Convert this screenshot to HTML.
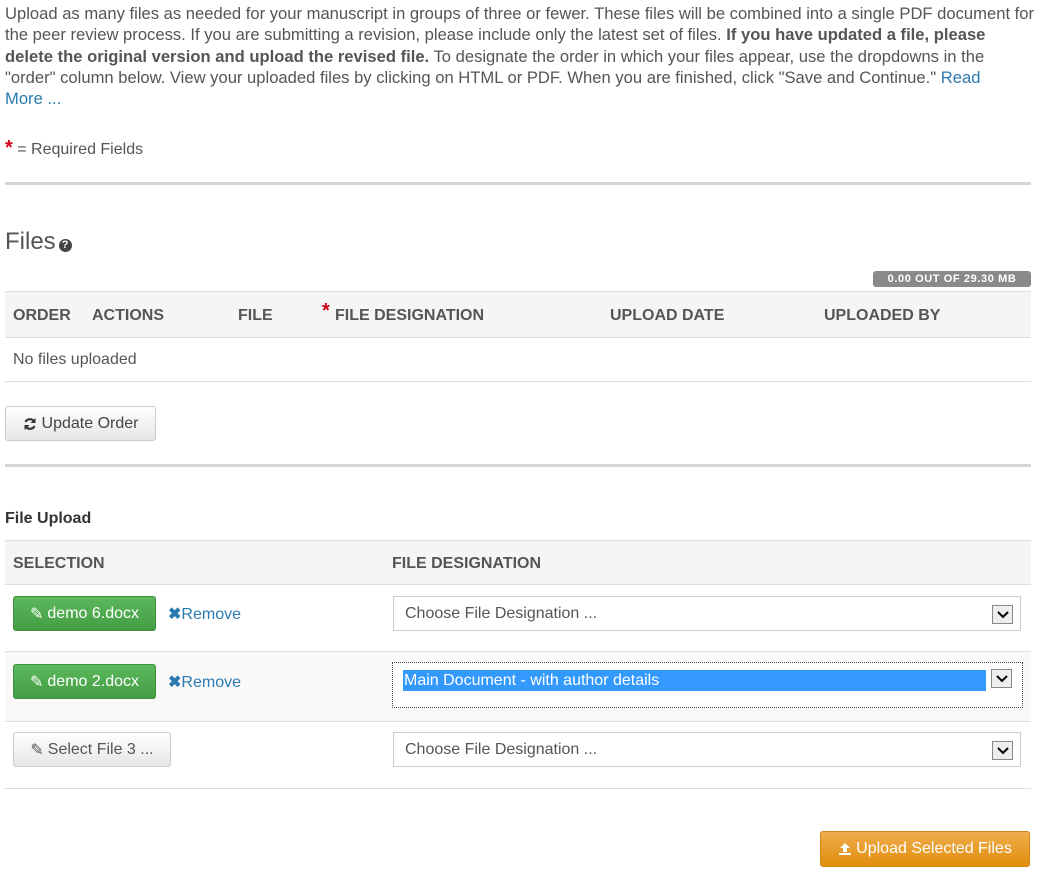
<!DOCTYPE html>
<html><head><meta charset="utf-8"><style>
*{box-sizing:border-box;margin:0;padding:0}
body{width:1052px;height:879px;background:#fff;font-family:"Liberation Sans",Arial,sans-serif;font-size:16px;color:#555;position:relative;overflow:hidden}
.a{position:absolute}
p.intro{position:absolute;left:5px;top:3px;width:1047px;line-height:21.3px;font-size:16.6px;white-space:nowrap}
a{color:#2a7ab0;text-decoration:none}
.req{color:#d0021b;font-weight:bold}
.hr{position:absolute;left:5px;width:1026px;height:3px;background:#d5d5d5}
.th{position:absolute;left:5px;width:1026px;background:#f5f5f5;border-top:1px solid #ddd;border-bottom:1px solid #ddd}
.th span{position:absolute;font-weight:bold;font-size:16px;color:#555;white-space:nowrap}
.line{position:absolute;left:5px;width:1026px;height:1px;background:#ddd}
.btn{position:absolute;border-radius:3px;font-size:16px;display:flex;align-items:center;justify-content:center;white-space:nowrap}
.gray{background:linear-gradient(#fff,#e6e6e6);border:1px solid #ccc;color:#444}
.green{background:linear-gradient(#5cb85c,#449d44);border:1px solid #3e8f3e;color:#fff}
.sel{position:absolute;left:393px;width:628px;height:35px;border:1px solid #ccc;background:#fff;color:#555;padding:8px 0 0 11px}
.arr{position:absolute;right:7px;top:8px;width:21px;height:19px;border:1px solid #888;background:#eee}
.arr svg{position:absolute;left:4px;top:4px}
.rm{position:absolute;color:#2a7ab0;font-size:16px}
.clip{margin-right:4px}
</style></head><body>
<p class="intro">Upload as many files as needed for your manuscript in groups of three or fewer. These files will be combined into a single PDF document for<br>the peer review process. If you are submitting a revision, please include only the latest set of files. <b>If you have updated a file, please</b><br><b>delete the original version and upload the revised file.</b> To designate the order in which your files appear, use the dropdowns in the<br>"order" column below. View your uploaded files by clicking on HTML or PDF. When you are finished, click "Save and Continue." <a>Read</a><br><a>More ...</a></p>
<div class="a" style="left:5px;top:137px"><span class="req" style="font-size:20px">*</span> = Required Fields</div>
<div class="hr" style="top:182px"></div>
<div class="a" style="left:5px;top:228px;font-size:24px;color:#555">Files<span style="display:inline-block;width:13px;height:13px;border-radius:50%;background:#444;color:#fff;font-size:11px;font-weight:bold;text-align:center;line-height:13px;margin-left:3px;vertical-align:1px">?</span></div>
<div class="a" style="left:873px;top:271px;width:158px;height:16px;background:#8a8a8a;border-radius:3px;color:#fff;font-size:11px;font-weight:bold;text-align:center;line-height:16px;letter-spacing:0.6px">0.00 OUT OF 29.30 MB</div>
<div class="th" style="top:291px;height:47px">
<span style="left:8px;top:15px">ORDER</span><span style="left:87px;top:15px">ACTIONS</span><span style="left:233px;top:15px">FILE</span><span class="req" style="left:317px;top:8px;font-size:20px;color:#d0021b">*</span><span style="left:330px;top:15px">FILE DESIGNATION</span><span style="left:605px;top:15px">UPLOAD DATE</span><span style="left:819px;top:15px">UPLOADED BY</span></div>
<div class="a" style="left:13px;top:351px">No files uploaded</div>
<div class="line" style="top:381px"></div>
<div class="btn gray" style="left:5px;top:406px;width:151px;height:35px"><svg width="14" height="14" viewBox="0 0 14 14" style="margin-right:5px"><path d="M11.5 5A5 5 0 0 0 2.5 5M2.5 9a5 5 0 0 0 9 0" stroke="#333" stroke-width="2.2" fill="none"/><path d="M12.5 1v5h-5zM1.5 13V8h5z" fill="#333"/></svg>Update Order</div>
<div class="hr" style="top:464px"></div>
<div class="a" style="left:5px;top:510px;font-weight:bold;color:#333">File Upload</div>
<div class="th" style="top:540px;height:45px"><span style="left:8px;top:14px">SELECTION</span><span style="left:387px;top:14px">FILE DESIGNATION</span></div>
<div class="btn green" style="left:13px;top:596px;width:143px;height:35px"><span class="clip">&#x270E;</span>demo 6.docx</div>
<div class="rm" style="left:168px;top:604px"><b>&#x2716;</b>Remove</div>
<div class="sel" style="top:596px">Choose File Designation ...<div class="arr"><svg width="12" height="10" viewBox="0 0 12 10"><path d="M1 2l5 5 5-5" stroke="#000" stroke-width="2" fill="none"/></svg></div></div>
<div class="a" style="left:5px;top:651px;width:1026px;height:70px;background:#f9f9f9;border-top:1px solid #ddd"></div>
<div class="btn green" style="left:13px;top:664px;width:143px;height:35px"><span class="clip">&#x270E;</span>demo 2.docx</div>
<div class="rm" style="left:168px;top:672px"><b>&#x2716;</b>Remove</div>
<div class="a" style="left:392px;top:662px;width:631px;height:46px;border:1px dotted #444;background:#fff"></div>
<div class="a" style="left:403px;top:670px;width:583px;height:21px;background:#3399ff;color:#fff;padding:1px 0 0 1px;line-height:19px">Main Document - with author details</div>
<div class="arr a" style="left:991px;top:669px;right:auto"><svg width="12" height="10" viewBox="0 0 12 10"><path d="M1 2l5 5 5-5" stroke="#000" stroke-width="2" fill="none"/></svg></div>
<div class="line" style="top:721px"></div>
<div class="btn gray" style="left:13px;top:732px;width:158px;height:35px;color:#555"><span class="clip">&#x270E;</span>Select File 3 ...</div>
<div class="sel" style="top:732px">Choose File Designation ...<div class="arr"><svg width="12" height="10" viewBox="0 0 12 10"><path d="M1 2l5 5 5-5" stroke="#000" stroke-width="2" fill="none"/></svg></div></div>
<div class="line" style="top:788px"></div>
<div class="btn" style="left:820px;top:831px;width:210px;height:36px;background:linear-gradient(#f0ad4e,#e08e0b);border:1px solid #d58512;color:#fff"><svg width="14" height="14" viewBox="0 0 14 14" style="margin-right:4px"><path d="M7 1L2 6h3v4h4V6h3z M1 11h12v2H1z" fill="#fff"/></svg>Upload Selected Files</div>
</body></html>
